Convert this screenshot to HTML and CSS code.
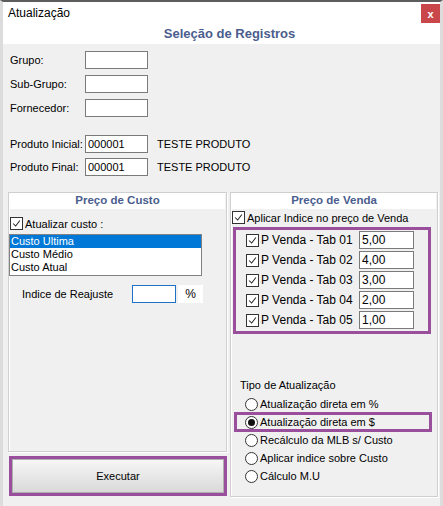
FILE: index.html
```html
<!DOCTYPE html>
<html lang="pt-BR">
<head>
    <meta charset="UTF-8">
    <title>Atualização</title>
    <link rel="stylesheet" href="styles.css">
</head>
<body>
    <div class="window">
        <div class="titlebar">
            <span class="title">Atualização</span>
            <span class="close">x</span>
        </div>
        <div class="heading">Seleção de Registros</div>

        <div class="content">
            <div class="filters">
                <div class="row"><label>Grupo:</label><input class="field" type="text"></div>
                <div class="row"><label>Sub-Grupo:</label><input class="field" type="text"></div>
                <div class="row"><label>Fornecedor:</label><input class="field" type="text"></div>
                <div class="row first-prod"><label>Produto Inicial:</label><input class="field" type="text" value="000001"><span class="desc">TESTE PRODUTO</span></div>
                <div class="row"><label>Produto Final:</label><input class="field" type="text" value="000001"><span class="desc">TESTE PRODUTO</span></div>
            </div>

            <div class="panels">
                <div class="col-left">
                    <div class="panel panel-custo">
                        <div class="panel-head">Preço de Custo</div>
                        <div class="check check-custo">
                            <span class="box"><svg viewBox="0 0 13 13"><polyline points="2.5,6.5 5.5,9.5 10.5,3" /></svg></span>
                            Atualizar custo :
                        </div>
                        <div class="listbox">
                            <div class="item selected">Custo Ultima</div>
                            <div class="item">Custo Médio</div>
                            <div class="item">Custo Atual</div>
                        </div>
                        <div class="reajuste">
                            <span class="reajuste-label">Indice de Reajuste</span>
                            <input class="field small" type="text">
                            <span class="pct">%</span>
                        </div>
                    </div>
                    <div class="exec-wrap">
                        <button class="exec">Executar</button>
                    </div>
                </div>

                <div class="panel panel-venda">
                    <div class="panel-head">Preço de Venda</div>
                    <div class="check check-aplicar">
                        <span class="box"><svg viewBox="0 0 13 13"><polyline points="2.5,6.5 5.5,9.5 10.5,3" /></svg></span>
                        Aplicar Indice no preço de Venda
                    </div>
                    <div class="tabs">
                        <div class="tab-row">
                            <div class="check"><span class="box"><svg viewBox="0 0 13 13"><polyline points="2.5,6.5 5.5,9.5 10.5,3" /></svg></span>P Venda - Tab 01</div>
                            <input class="field val" type="text" value="5,00">
                        </div>
                        <div class="tab-row">
                            <div class="check"><span class="box"><svg viewBox="0 0 13 13"><polyline points="2.5,6.5 5.5,9.5 10.5,3" /></svg></span>P Venda - Tab 02</div>
                            <input class="field val" type="text" value="4,00">
                        </div>
                        <div class="tab-row">
                            <div class="check"><span class="box"><svg viewBox="0 0 13 13"><polyline points="2.5,6.5 5.5,9.5 10.5,3" /></svg></span>P Venda - Tab 03</div>
                            <input class="field val" type="text" value="3,00">
                        </div>
                        <div class="tab-row">
                            <div class="check"><span class="box"><svg viewBox="0 0 13 13"><polyline points="2.5,6.5 5.5,9.5 10.5,3" /></svg></span>P Venda - Tab 04</div>
                            <input class="field val" type="text" value="2,00">
                        </div>
                        <div class="tab-row">
                            <div class="check"><span class="box"><svg viewBox="0 0 13 13"><polyline points="2.5,6.5 5.5,9.5 10.5,3" /></svg></span>P Venda - Tab 05</div>
                            <input class="field val" type="text" value="1,00">
                        </div>
                    </div>

                    <div class="tipo">
                        <div class="tipo-label">Tipo de Atualização</div>
                        <div class="radio"><span class="dot"></span>Atualização direta em %</div>
                        <div class="radio chosen"><span class="dot"></span>Atualização direta em $</div>
                        <div class="radio"><span class="dot"></span>Recálculo da MLB s/ Custo</div>
                        <div class="radio"><span class="dot"></span>Aplicar indice sobre Custo</div>
                        <div class="radio"><span class="dot"></span>Cálculo M.U</div>
                    </div>
                </div>
            </div>
        </div>
    </div>
</body>
</html>
```

FILE: styles.css
```css
body {
    margin: 0;
    font-family: "Liberation Sans", Arial, sans-serif;
    font-size: 11px;
    color: #000;
    background-color: #e6e6e6;
}

.window {
    width: 443px;
    height: 506px;
    box-sizing: border-box;
    border-top: 2px solid #5c5c5c;
    border-left: 3px solid #dcdcdc;
    border-right: 3px solid #dcdcdc;
    background-color: #f0f0f0;
    overflow: hidden;
}

.titlebar {
    height: 26px;
    background-color: #fff;
    display: flex;
    justify-content: space-between;
    align-items: center;
    padding-left: 5px;
}

.title {
    font-size: 12px;
    margin-top: -4px;
}

.close {
    width: 19px;
    height: 19px;
    margin-top: -3px;
    background-color: #c9464a;
    color: #fff;
    font-weight: bold;
    font-size: 11px;
    display: flex;
    align-items: center;
    justify-content: center;
}

.heading {
    height: 16px;
    background-color: #fff;
    text-align: center;
    font-weight: bold;
    font-size: 13px;
    color: #4a5d8e;
    line-height: 12px;
    padding-left: 16px;
}

.content {
    padding: 7px 0 0 5px;
}

.filters {
    padding-left: 2px;
}

.row {
    display: flex;
    align-items: center;
    height: 18px;
    margin-bottom: 6px;
}

.row label {
    width: 75px;
    white-space: nowrap;
}

.row.first-prod {
    margin-top: 18px;
    margin-bottom: 5px;
}

.field {
    box-sizing: border-box;
    width: 63px;
    height: 18px;
    border: 1px solid #7a7a7a;
    background-color: #fff;
    font-family: inherit;
    font-size: 11px;
    padding: 0 2px;
    margin: 0;
    outline: none;
}

.desc {
    margin-left: 9px;
}

.panels {
    display: flex;
    gap: 3px;
    margin-top: 16px;
}

.panel {
    box-sizing: border-box;
    border: 1px solid #cfcfcf;
    box-shadow: inset 1px 1px 0 #fff, 1px 1px 0 #fff;
}

.panel-head {
    height: 16px;
    background-color: #fff;
    margin: 0 1px;
    text-align: center;
    font-weight: bold;
    font-size: 11.5px;
    line-height: 14px;
    color: #4a5d8e;
}

.col-left {
    width: 219px;
}

.panel-custo {
    height: 260px;
}

.check {
    display: flex;
    align-items: center;
}

.box {
    width: 13px;
    height: 13px;
    box-sizing: border-box;
    border: 1px solid #333;
    background-color: #fff;
    margin-right: 2px;
}

.box svg {
    display: block;
    width: 11px;
    height: 11px;
}

.box polyline {
    fill: none;
    stroke: #222;
    stroke-width: 1.2;
}

.check-custo {
    margin: 8px 0 0 1px;
}

.listbox {
    box-sizing: border-box;
    width: 193px;
    height: 42px;
    margin-top: 4px;
    border: 1px solid #828282;
    background-color: #fff;
}

.item {
    height: 13px;
    line-height: 13px;
    padding-left: 1px;
}

.item.selected {
    background-color: #0078d7;
    color: #fff;
}

.reajuste {
    display: flex;
    align-items: center;
    margin-top: 9px;
    padding-left: 13px;
}

.reajuste-label {
    width: 110px;
}

.field.small {
    width: 44px;
    height: 18px;
    border-color: #1c73c8;
}

.pct {
    width: 25px;
    height: 18px;
    margin-left: 2px;
    background-color: #fff;
    display: flex;
    align-items: center;
    justify-content: center;
    font-size: 12px;
}

.exec-wrap {
    margin-top: 4px;
    margin-left: 1px;
    width: 218px;
    height: 40px;
    box-sizing: border-box;
    border: 3px solid #9a4f9c;
}

.exec {
    width: 100%;
    height: 100%;
    border: 1px solid #b0b0b0;
    background: linear-gradient(#f6f6f6, #d9d9d9);
    font-family: inherit;
    font-size: 11px;
    color: #000;
}

.panel-venda {
    width: 208px;
    height: 305px;
}

.check-aplicar {
    margin: 2px 0 0 1px;
}

.tabs {
    box-sizing: border-box;
    margin: 3px 0 0 2px;
    width: 198px;
    height: 107px;
    border: 3px solid #9a4f9c;
    padding: 1px 0 0 10px;
    font-size: 12px;
}

.tab-row {
    display: flex;
    align-items: center;
    justify-content: space-between;
    height: 18px;
    margin-bottom: 2px;
    padding-right: 14px;
}

.field.val {
    width: 55px;
    font-size: 12px;
}

.tipo {
    margin-top: 45px;
}

.tipo-label {
    padding-left: 9px;
    margin-bottom: 4px;
}

.radio {
    display: flex;
    align-items: center;
    height: 18px;
    padding-left: 14px;
    box-sizing: border-box;
}

.radio.chosen {
    margin: -1px 5px -1px 3px;
    height: 20px;
    padding-left: 8px;
    border: 3px solid #9a4f9c;
}

.dot {
    width: 13px;
    height: 13px;
    box-sizing: border-box;
    border: 1px solid #333;
    border-radius: 50%;
    background-color: #fff;
    margin-right: 2px;
    position: relative;
}

.chosen .dot::after {
    content: "";
    position: absolute;
    left: 2px;
    top: 2px;
    width: 7px;
    height: 7px;
    border-radius: 50%;
    background-color: #111;
}
```
